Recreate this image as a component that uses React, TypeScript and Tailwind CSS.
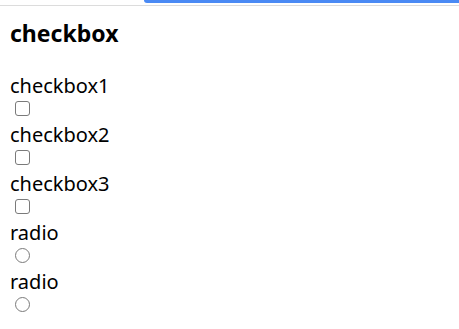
import React from "react";

const font = { fontFamily: '"Noto Sans", "Open Sans", sans-serif' };

const items = [
  { label: "checkbox1", type: "checkbox" },
  { label: "checkbox2", type: "checkbox" },
  { label: "checkbox3", type: "checkbox" },
  { label: "radio", type: "radio" },
  { label: "radio", type: "radio" },
];

export default function App() {
  return (
    <div className="min-h-screen bg-white text-black" style={font}>
      {/* top strip */}
      <div className="h-[6px] border-b border-[#dcdcdc]">
        <div className="ml-[144px] h-[3px] rounded-bl-[6px] bg-[#4a8af4]" />
      </div>

      <div className="px-[10px]">
        <h3 className="mt-[11px] h-[32px] text-[23px] leading-[32px] font-bold">checkbox</h3>

        <div className="mt-[24px] flex flex-col">
          {items.map((item, i) => (
            <div key={i} className="flex flex-col">
              <div className="h-[26px] text-[20px] leading-[26px]">{item.label}</div>
              <div className="h-[23px]">
                <input
                  type={item.type}
                  name={item.type === "radio" ? "r" : undefined}
                  className={
                    "appearance-none block m-0 ml-[5px] mt-[2px] w-[15px] h-[15px] border border-[#7a7a7a] bg-white " +
                    (item.type === "radio" ? "rounded-full" : "rounded-[3px]")
                  }
                />
              </div>
            </div>
          ))}
        </div>
      </div>
    </div>
  );
}
